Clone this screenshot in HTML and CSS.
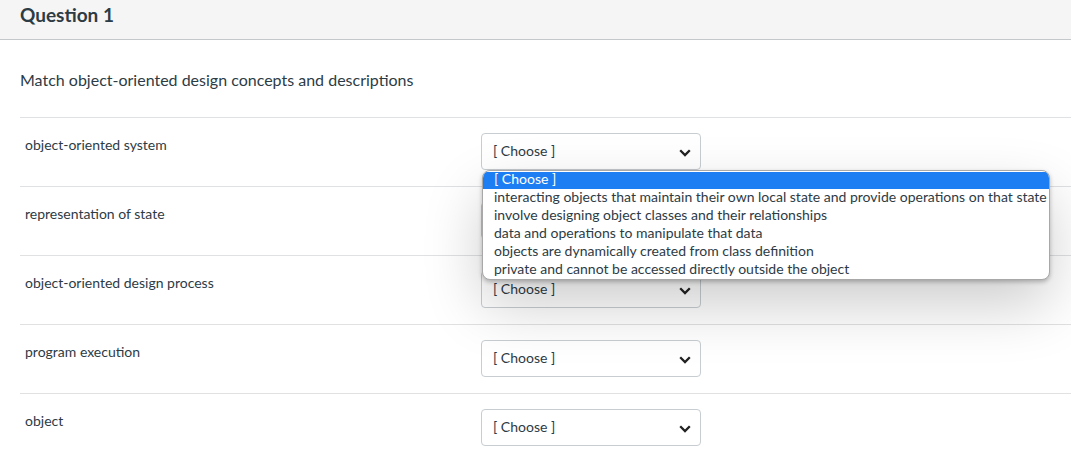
FILE: index.html
```html
<!DOCTYPE html>
<html>
<head>
<meta charset="utf-8">
<link rel="stylesheet" href="styles.css">
</head>
<body>
<div class="header"><h2 class="title">Question 1</h2></div>
<div class="content">
  <p class="desc">Match object-oriented design concepts and descriptions</p>
  <div class="rows">
    <div class="row">
      <div class="label">object-oriented system</div>
      <div class="cell">
        <div class="select"><span>[ Choose ]</span><svg class="chev" width="12" height="8" viewBox="0 0 12 8"><path d="M1.2 1.2 L6 6 L10.8 1.2" fill="none" stroke="#222" stroke-width="2.3"/></svg></div>
        <div class="popup">
          <div class="opt sel">[ Choose ]</div>
          <div class="opt">interacting objects that maintain their own local state and provide operations on that state</div>
          <div class="opt">involve designing object classes and their relationships</div>
          <div class="opt">data and operations to manipulate that data</div>
          <div class="opt">objects are dynamically created from class definition</div>
          <div class="opt">private and cannot be accessed directly outside the object</div>
        </div>
      </div>
    </div>
    <div class="row">
      <div class="label">representation of state</div>
      <div class="cell">
        <div class="select"><span>[ Choose ]</span><svg class="chev" width="12" height="8" viewBox="0 0 12 8"><path d="M1.2 1.2 L6 6 L10.8 1.2" fill="none" stroke="#222" stroke-width="2.3"/></svg></div>
      </div>
    </div>
    <div class="row">
      <div class="label">object-oriented design process</div>
      <div class="cell">
        <div class="select"><span>[ Choose ]</span><svg class="chev" width="12" height="8" viewBox="0 0 12 8"><path d="M1.2 1.2 L6 6 L10.8 1.2" fill="none" stroke="#222" stroke-width="2.3"/></svg></div>
      </div>
    </div>
    <div class="row">
      <div class="label">program execution</div>
      <div class="cell">
        <div class="select"><span>[ Choose ]</span><svg class="chev" width="12" height="8" viewBox="0 0 12 8"><path d="M1.2 1.2 L6 6 L10.8 1.2" fill="none" stroke="#222" stroke-width="2.3"/></svg></div>
      </div>
    </div>
    <div class="row last">
      <div class="label">object</div>
      <div class="cell">
        <div class="select"><span>[ Choose ]</span><svg class="chev" width="12" height="8" viewBox="0 0 12 8"><path d="M1.2 1.2 L6 6 L10.8 1.2" fill="none" stroke="#222" stroke-width="2.3"/></svg></div>
      </div>
    </div>
  </div>
</div>
</body>
</html>
```
FILE: styles.css
```css
html, body {
  margin: 0;
  padding: 0;
  background: #fff;
  font-family: Lato, "Liberation Sans", sans-serif;
  color: #2d3b45;
}
.header {
  height: 39px;
  background: #f5f5f5;
  border-bottom: 1px solid #c4c8cb;
  padding-left: 20px;
}
.title {
  margin: 0;
  padding-top: 4px;
  font-size: 19px;
  line-height: 22px;
  font-weight: 700;
  color: #2d3b45;
}
.content {
  padding-left: 20px;
}
.desc {
  margin: 0;
  padding-top: 30px;
  font-size: 16px;
  line-height: 20px;
  height: 47px;
}
.rows {
  border-top: 1px solid #dfe1e3;
}
.row {
  display: flex;
  height: 68px;
  border-bottom: 1px solid #dfe1e3;
}
.row.last {
  border-bottom: none;
}
.label {
  width: 456px;
  padding-left: 5px;
  padding-top: 18px;
  font-size: 14px;
  line-height: 18px;
}
.cell {
  position: relative;
  padding-top: 15px;
}
.select {
  width: 220px;
  height: 37px;
  box-sizing: border-box;
  border: 1px solid #c7cdd1;
  border-radius: 4px;
  background: #fff;
  display: flex;
  align-items: center;
  justify-content: space-between;
  padding: 0 9px 2px 11px;
  font-size: 14px;
  color: #2d3b45;
}
.chev {
  display: block;
  margin-top: 4px;
}
.popup {
  position: absolute;
  left: 1px;
  top: 52px;
  width: 568px;
  box-sizing: border-box;
  border: 1px solid #a8a8a8;
  border-radius: 8px;
  background: #fff;
  overflow: hidden;
  z-index: 10;
  box-shadow: 0 2px 4px rgba(0,0,0,0.25), 0 25px 60px rgba(0,0,0,0.2);
}
.opt {
  font-size: 14px;
  line-height: 15px;
  height: 18px;
  padding-left: 11px;
  color: #2d3b45;
  white-space: nowrap;
}
.opt.sel {
  background: #1c7ef2;
  color: #fff;
  height: 17px;
  line-height: 13px;
  margin-top: 1px;
}
```
